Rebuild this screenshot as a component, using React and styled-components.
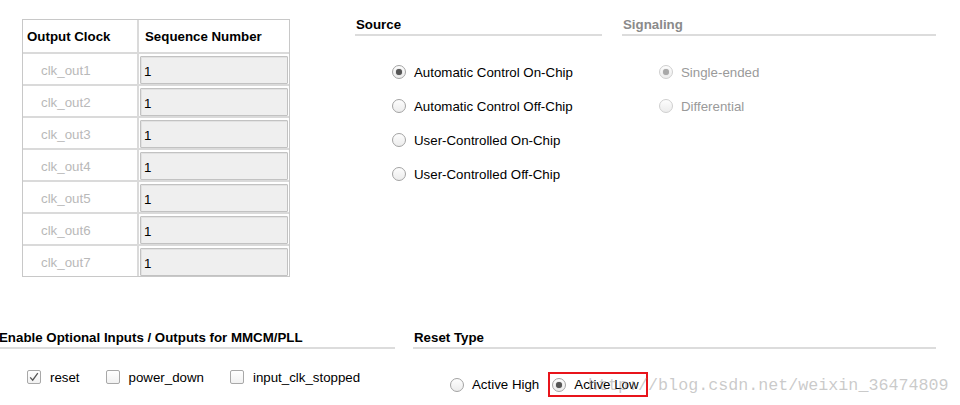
import React from 'react';
import styled, { createGlobalStyle } from 'styled-components';

const GlobalStyle = createGlobalStyle`
  html, body {
    margin: 0;
    padding: 0;
    background: #fff;
  }
`;

const Page = styled.div`
  position: relative;
  width: 960px;
  height: 405px;
  overflow: hidden;
  background: #fff;
  font-family: "Liberation Sans", Arial, sans-serif;
  font-size: 13.3px;
  color: #000;
`;

const TopRow = styled.div`
  display: flex;
  align-items: flex-start;
  padding: 17px 0 0 22px;
`;

const ClockTable = styled.div`
  display: grid;
  grid-template-columns: 114px minmax(0, 1fr);
  grid-template-rows: 32px;
  grid-auto-rows: 30px;
  gap: 2px;
  box-sizing: border-box;
  width: 268px;
  margin-top: 2px;
  border: 1px solid #c8c8c8;
  background: #dadada;
`;

const HeadCell = styled.div`
  display: flex;
  align-items: center;
  padding: 1px ${(p) => (p.$wide ? '6px' : '4px')} 0;
  background: #fff;
  font-weight: bold;
`;

const NameCell = styled.div`
  display: flex;
  align-items: center;
  padding: 2px 0 0 18px;
  background: #fff;
  color: #b9b9b9;
`;

const ValueCell = styled.div`
  display: flex;
  min-width: 0;
  padding: 2px 1px 0;
  background: #fff;
`;

const SeqInput = styled.input`
  width: 100%;
  min-width: 0;
  box-sizing: border-box;
  height: 28px;
  margin: 0;
  padding: 2px 3px 0;
  border: 1px solid #c2c2c2;
  border-radius: 1px;
  background: #efefef;
  box-shadow: inset 1px 1px 0 #e2e2e2;
  font: inherit;
  color: #000;
  outline: none;
`;

const Panel = styled.section`
  width: ${(p) => p.$width}px;
  margin-left: ${(p) => p.$offset || 0}px;
`;

const PanelHeading = styled.div`
  padding: 0 1px 1px;
  line-height: 16px;
  font-weight: bold;
  color: ${(p) => (p.$muted ? '#8a8a8a' : '#000')};
  border-bottom: 2px solid #dcdcdc;
`;

const RadioList = styled.div`
  display: flex;
  flex-direction: column;
  padding: 19px 0 0 37px;
`;

const OptionRow = styled.label`
  display: flex;
  align-items: center;
  gap: 8px;
  height: 34px;
  color: ${(p) => (p.$disabled ? '#9a9a9a' : '#000')};
`;

const RadioDot = styled.span`
  position: relative;
  box-sizing: border-box;
  width: 14px;
  height: 14px;
  border-radius: 50%;
  border: 1px solid ${(p) => (p.$disabled ? '#cfcfcf' : '#a3a3a3')};
  background: linear-gradient(#fdfdfd, #ececec);
  flex-shrink: 0;

  &::after {
    content: '';
    display: ${(p) => (p.$checked ? 'block' : 'none')};
    position: absolute;
    left: 3px;
    top: 3px;
    width: 6px;
    height: 6px;
    border-radius: 50%;
    background: ${(p) => (p.$disabled ? '#a8a8a8' : '#555')};
    box-shadow: 0 0 1px ${(p) => (p.$disabled ? '#bbb' : '#777')};
  }
`;

const BottomRow = styled.div`
  display: flex;
  align-items: flex-start;
  margin-top: 53px;
  margin-left: -2px;
`;

const CheckRow = styled.div`
  display: flex;
  align-items: center;
  gap: 26px;
  height: 24px;
  margin-top: 16px;
  padding-left: 29px;
`;

const CheckItem = styled.label`
  display: flex;
  align-items: center;
  gap: 9px;
`;

const CheckBox = styled.span`
  display: flex;
  align-items: center;
  justify-content: center;
  box-sizing: border-box;
  width: 14px;
  height: 14px;
  border: 1px solid #a8a8a8;
  border-radius: 2px;
  background: linear-gradient(#fff, #f1f1f1);
`;

const ResetRow = styled.div`
  display: flex;
  align-items: center;
  gap: 9px;
  margin-top: 23px;
  padding-left: 37px;
`;

const InlineOption = styled.label`
  display: flex;
  align-items: center;
  gap: 8px;
  height: 21px;
`;

const Highlight = styled.div`
  display: flex;
  border: 2px solid #e8141b;
  padding: 0 7px 0 2px;
`;

const Watermark = styled.div`
  position: absolute;
  left: 588px;
  top: 376px;
  font-family: "Liberation Mono", "Courier New", monospace;
  font-size: 16.7px;
  line-height: 20px;
  color: rgba(150, 150, 150, 0.5);
  white-space: nowrap;
  pointer-events: none;
`;

const clocks = [1, 2, 3, 4, 5, 6, 7];

const Radio = ({ label, checked, disabled }) => (
  <OptionRow $disabled={disabled}>
    <RadioDot $checked={checked} $disabled={disabled} />
    {label}
  </OptionRow>
);

const Check = ({ label, checked }) => (
  <CheckItem>
    <CheckBox>
      {checked && (
        <svg width="12" height="12" viewBox="0 0 12 12">
          <path d="M2.2 6.4 L4.7 9.2 L9.8 2.2" fill="none" stroke="#555" strokeWidth="1.3" />
        </svg>
      )}
    </CheckBox>
    {label}
  </CheckItem>
);

export default function App() {
  return (
    <Page>
      <GlobalStyle />
      <TopRow>
        <ClockTable>
          <HeadCell>Output Clock</HeadCell>
          <HeadCell $wide>Sequence Number</HeadCell>
          {clocks.map((n) => (
            <React.Fragment key={n}>
              <NameCell>clk_out{n}</NameCell>
              <ValueCell>
                <SeqInput readOnly defaultValue="1" />
              </ValueCell>
            </React.Fragment>
          ))}
        </ClockTable>

        <Panel $width={247} $offset={65}>
          <PanelHeading>Source</PanelHeading>
          <RadioList>
            <Radio label="Automatic Control On-Chip" checked />
            <Radio label="Automatic Control Off-Chip" />
            <Radio label="User-Controlled On-Chip" />
            <Radio label="User-Controlled Off-Chip" />
          </RadioList>
        </Panel>

        <Panel $width={314} $offset={20}>
          <PanelHeading $muted>Signaling</PanelHeading>
          <RadioList>
            <Radio label="Single-ended" checked disabled />
            <Radio label="Differential" disabled />
          </RadioList>
        </Panel>
      </TopRow>

      <BottomRow>
        <Panel $width={397}>
          <PanelHeading>Enable Optional Inputs / Outputs for MMCM/PLL</PanelHeading>
          <CheckRow>
            <Check label="reset" checked />
            <Check label="power_down" />
            <Check label="input_clk_stopped" />
          </CheckRow>
        </Panel>

        <Panel $width={523} $offset={18}>
          <PanelHeading>Reset Type</PanelHeading>
          <ResetRow>
            <InlineOption>
              <RadioDot />
              Active High
            </InlineOption>
            <Highlight>
              <InlineOption>
                <RadioDot $checked />
                Active Low
              </InlineOption>
            </Highlight>
          </ResetRow>
        </Panel>
      </BottomRow>

      <Watermark>http://blog.csdn.net/weixin_36474809</Watermark>
    </Page>
  );
}
